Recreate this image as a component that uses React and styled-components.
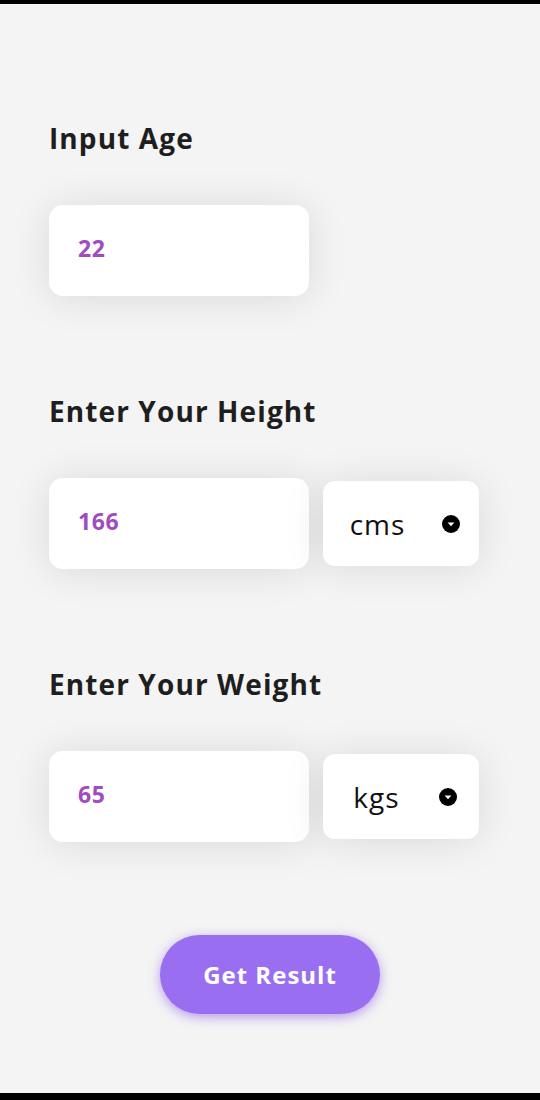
import React from "react";
import styled, { createGlobalStyle } from "styled-components";

const GlobalStyle = createGlobalStyle`
  body {
    margin: 0;
    background: #f4f4f4;
    font-family: "Open Sans", "Liberation Sans", sans-serif;
  }
`;

const Page = styled.div`
  box-sizing: border-box;
  height: 1100px;
  background: #f4f4f4;
  border-top: 4px solid #000;
  border-bottom: 7px solid #000;
  padding: 117px 0 0 49px;
  display: flex;
  flex-direction: column;
  gap: 98px;
`;

const Field = styled.section`
  display: flex;
  flex-direction: column;
`;

const Label = styled.h2`
  margin: 0 0 50px;
  font-size: 28px;
  line-height: 34px;
  font-weight: 700;
  color: #1e1e1e;
  letter-spacing: 1.1px;
`;

const Row = styled.div`
  display: flex;
  align-items: center;
  gap: 14px;
`;

const ValueBox = styled.div`
  box-sizing: border-box;
  width: 260px;
  height: 91px;
  padding: 0 0 5px 29px;
  display: flex;
  align-items: center;
  background: #fff;
  border-radius: 14px;
  box-shadow: 0 2px 40px rgba(0, 0, 0, 0.11);
  color: #a04cbf;
  font-size: 23px;
  font-weight: 700;
  letter-spacing: 0.6px;
`;

const UnitSelect = styled.div`
  box-sizing: border-box;
  width: 156px;
  height: 85px;
  padding-left: 8px;
  display: flex;
  align-items: center;
  justify-content: center;
  gap: ${(p) => p.$gap}px;
  background: #fff;
  border-radius: 12px;
  box-shadow: 0 2px 40px rgba(0, 0, 0, 0.11);
  color: #111;
  font-size: 28px;
  font-weight: 400;
  letter-spacing: 1px;
`;

const ButtonWrap = styled.div`
  display: flex;
  justify-content: center;
  margin: -5px 0 0 -49px;
`;

const ResultButton = styled.button`
  width: 220px;
  height: 79px;
  border: none;
  border-radius: 40px;
  background: #9a6ef0;
  color: #fff;
  font-family: inherit;
  font-size: 24px;
  font-weight: 700;
  letter-spacing: 1px;
  box-shadow: 0 3px 12px rgba(130, 80, 230, 0.55);
`;

const Caret = () => (
  <svg width="18" height="18" viewBox="0 0 18 18">
    <circle cx="9" cy="9" r="9" fill="#000" />
    <path d="M5.6 7.4h6.8L9 11.2z" fill="#fff" />
  </svg>
);

export default function App() {
  return (
    <>
      <GlobalStyle />
      <Page>
        <Field>
          <Label>Input Age</Label>
          <Row>
            <ValueBox>22</ValueBox>
          </Row>
        </Field>
        <Field>
          <Label>Enter Your Height</Label>
          <Row>
            <ValueBox>166</ValueBox>
            <UnitSelect $gap={37}>
              cms
              <Caret />
            </UnitSelect>
          </Row>
        </Field>
        <Field>
          <Label>Enter Your Weight</Label>
          <Row>
            <ValueBox>65</ValueBox>
            <UnitSelect $gap={39}>
              kgs
              <Caret />
            </UnitSelect>
          </Row>
        </Field>
        <ButtonWrap>
          <ResultButton>Get Result</ResultButton>
        </ButtonWrap>
      </Page>
    </>
  );
}
